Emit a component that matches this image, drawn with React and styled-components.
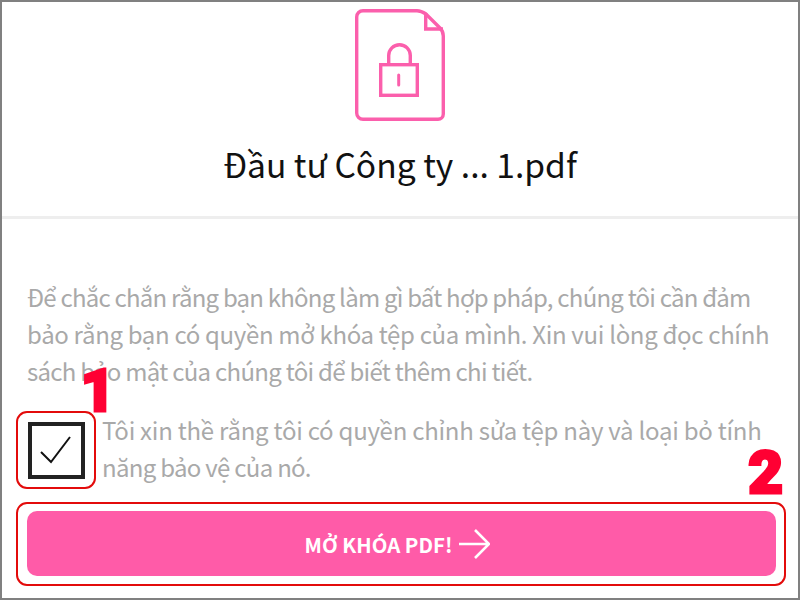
import React from "react";
import styled, { createGlobalStyle } from "styled-components";

const Global = createGlobalStyle`
  html, body { margin: 0; padding: 0; background: #fff; }
  body { font-family: "Noto Sans CJK SC", "Noto Sans", sans-serif; }
`;
const Frame = styled.div`
  width: 800px; height: 600px; box-sizing: border-box;
  border: 2px solid #808080; background: #fff; overflow: hidden;
`;
const Header = styled.header`
  height: 217px; box-sizing: border-box; padding-top: 7px;
  border-bottom: 3px solid #eeeeee;
  display: flex; flex-direction: column; align-items: center;
`;
const Title = styled.h1`
  margin: 19px 0 0; font-size: 33.6px; line-height: 48px; font-weight: 400; color: #111;
`;
const Body = styled.div`
  padding: 59px 14px 0;
`;
const Paragraph = styled.p`
  margin: 0 0 0 ${p => p.$indent || 0}px; font-size: 24px; line-height: 37px; color: #a9a9a9; white-space: nowrap;
`;
const Line = styled.span`
  display: block; letter-spacing: ${p => p.$ls}px;
`;
const ConfirmRow = styled.div`
  display: flex; gap: 6px; margin-top: 22px; align-items: flex-start;
`;
const CheckMarker = styled.div`
  position: relative; width: 80px; height: 78px; box-sizing: border-box; flex: none;
  border: 2px solid #e30b0b; border-radius: 11px;
  display: flex; align-items: center; justify-content: center;
`;
const Check = styled.div`
  width: 57px; height: 57px; box-sizing: border-box;
  border: 4px solid #222; display: flex; align-items: center; justify-content: center;
`;
const ButtonMarker = styled.div`
  position: relative; width: 770px; height: 84px; box-sizing: border-box; margin-top: 13px;
  border: 2px solid #e30b0b; border-radius: 11px; padding: 7px 8px 8px 9px; display: flex;
`;
const Button = styled.button`
  flex: 1; display: flex; border: 0; border-radius: 10px;
  background: #ff5ba8; color: #fff; align-items: center; justify-content: center; gap: 7px;
  font: 700 20.4px "Noto Sans CJK SC", "Noto Sans", sans-serif; padding: 0 8px 0 0;
`;
const Num = styled.div`
  position: absolute; right: ${p => p.$r}px; bottom: ${p => p.$b}px;
  font: 900 ${p => p.$size}px/${p => p.$size}px Roboto, "Liberation Sans", sans-serif; color: #ff0033;
  -webkit-text-stroke: 3px #ff0033;
`;

const FileLock = () => (
  <svg width="90" height="112" viewBox="0 0 90 112" fill="none" stroke="#fb5fac" strokeWidth="3.4">
    <path d="M62 1.700H8a6.300 6.300 0 0 0-6.300 6.300v96a6.300 6.300 0 0 0 6.300 6.300h75a5.300 5.300 0 0 0 5.300-5.300V27C88.300 24 87 21 85 19L71 5C68 3 65 1.700 62 1.700Z" />
    <path d="M70.700 4V20H88" />
    <rect x="25.700" y="55.700" width="36.600" height="30.600" />
    <path d="M33.700 55V46.500a10.800 10.800 0 0 1 21.600 0V55" />
    <path d="M43.700 66V76" strokeLinecap="round" strokeWidth="3" />
  </svg>
);

export default function App() {
  return (
    <Frame>
      <Global />
      <Header>
        <FileLock />
        <Title>Đầu tư Công ty ... 1.pdf</Title>
      </Header>
      <Body>
        <Paragraph $indent={11}>
          <Line $ls={-0.77}>Để chắc chắn rằng bạn không làm gì bất hợp pháp, chúng tôi cần đảm</Line>
          <Line $ls={-0.32}>bảo rằng bạn có quyền mở khóa tệp của mình. Xin vui lòng đọc chính</Line>
          <Line $ls={-0.72}>sách bảo mật của chúng tôi để biết thêm chi tiết.</Line>
        </Paragraph>
        <ConfirmRow>
          <CheckMarker>
            <Check>
              <svg width="32" height="28" viewBox="0 0 32 28" fill="none" stroke="#111" strokeWidth="2">
                <path d="M1 16L11 26L30 1" />
              </svg>
            </Check>
            <Num $r={-21} $b={67} $size={59}>1</Num>
          </CheckMarker>
          <Paragraph>
            <Line $ls={-0.25}>Tôi xin thề rằng tôi có quyền chỉnh sửa tệp này và loại bỏ tính</Line>
            <Line $ls={-0.7}>năng bảo vệ của nó.</Line>
          </Paragraph>
        </ConfirmRow>
        <ButtonMarker>
          <Button>
            MỞ KHÓA PDF!
            <svg width="31" height="30" viewBox="0 0 31 30" fill="none" stroke="#fff" strokeWidth="2.6">
              <path d="M0 15H29M16 1L30 15L16 29" />
            </svg>
          </Button>
          <Num $r={1} $b={81} $size={60}>2</Num>
        </ButtonMarker>
      </Body>
    </Frame>
  );
}
